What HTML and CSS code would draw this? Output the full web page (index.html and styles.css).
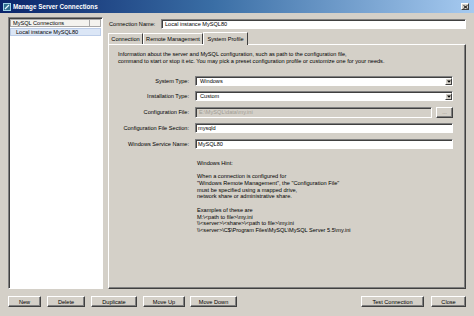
FILE: index.html
```html
<!DOCTYPE html>
<html>
<head>
<meta charset="utf-8">
<link rel="stylesheet" href="styles.css">
</head>
<body>
<div class="window">
  <div class="titlebar">
    <svg class="app-icon" viewBox="0 0 8 8" width="8" height="8">
      <rect x="0.5" y="0.5" width="7" height="7" fill="#2f6f8f" stroke="#9fd3e6" stroke-width="1"/>
      <path d="M2 6 L6 2" stroke="#e6f6ff" stroke-width="1.2"/>
    </svg>
    <span class="title">Manage Server Connections</span>
    <span class="close-btn">
      <svg viewBox="0 0 5 4" width="5" height="4"><path d="M0.5 0.3 L4.5 3.7 M4.5 0.3 L0.5 3.7" stroke="#000" stroke-width="1"/></svg>
    </span>
  </div>
  <div class="content">
    <div class="main">
      <div class="conn-list">
        <div class="list-header">
          <span class="col-main">MySQL Connections</span>
          <span class="col-rest"></span>
        </div>
        <div class="list-row selected">Local instance MySQL80</div>
      </div>
      <div class="right">
        <div class="name-row">
          <span class="name-label">Connection Name:</span>
          <span class="field name-field">Local instance MySQL80</span>
        </div>
        <div class="tabs">
          <span class="tab tab-conn">Connection</span>
          <span class="tab tab-remote">Remote Management</span>
          <span class="tab tab-active">System Profile</span>
        </div>
        <div class="panel">
          <p class="info">Information about the server and MySQL configuration, such as path to the configuration file,<br>command to start or stop it etc. You may pick a preset configuration profile or customize one for your needs.</p>
          <div class="form">
            <span class="label">System Type:</span>
            <span class="field combo">Windows<span class="arrow"><svg viewBox="0 0 4 3" width="4" height="3"><path d="M0 0.5 H4 L2 2.7 Z" fill="#000"/></svg></span></span>
            <span class="label">Installation Type:</span>
            <span class="field combo">Custom<span class="arrow"><svg viewBox="0 0 4 3" width="4" height="3"><path d="M0 0.5 H4 L2 2.7 Z" fill="#000"/></svg></span></span>
            <span class="label">Configuration File:</span>
            <span class="file-row">
              <span class="field disabled">E:\MySQL\data\my.ini</span>
              <span class="browse-btn">...</span>
            </span>
            <span class="label">Configuration File Section:</span>
            <span class="field plain">mysqld</span>
            <span class="label">Windows Service Name:</span>
            <span class="field plain">MySQL80</span>
          </div>
          <div class="hint">
            <div>Windows Hint:</div>
            <div>&nbsp;</div>
            <div>When a connection is configured for</div>
            <div>"Windows Remote Management", the "Configuration File"</div>
            <div>must be specified using a mapped drive,</div>
            <div>network share or administrative share.</div>
            <div>&nbsp;</div>
            <div>Examples of these are</div>
            <div>M:\&lt;path to file&gt;\my.ini</div>
            <div>\\&lt;server&gt;\&lt;share&gt;\&lt;path to file&gt;\my.ini</div>
            <div>\\&lt;server&gt;\C$\Program Files\MySQL\MySQL Server 5.5\my.ini</div>
          </div>
        </div>
      </div>
    </div>
    <div class="buttons">
      <span class="btn b-new">New</span>
      <span class="btn b-delete">Delete</span>
      <span class="btn b-dup">Duplicate</span>
      <span class="btn b-up">Move Up</span>
      <span class="btn b-down">Move Down</span>
      <span class="btn b-test">Test Connection</span>
      <span class="btn b-close">Close</span>
    </div>
  </div>
</div>
</body>
</html>
```
FILE: styles.css
```css
* { box-sizing: border-box; margin: 0; padding: 0; }
html, body { margin: 0; }
body {
  width: 474px;
  height: 316px;
  overflow: hidden;
  background: #d4d0c8;
  font-family: "Liberation Sans", Arial, sans-serif;
  font-size: 5.6px;
  color: #000;
}
.window {
  width: 474px;
  height: 316px;
  display: flex;
  flex-direction: column;
}
.titlebar {
  height: 13px;
  flex: none;
  background: linear-gradient(to right, #0a246a 0%, #3a6ea5 45%, #a6caf0 100%);
  display: flex;
  align-items: center;
  padding: 0 5px 0 3px;
  color: #fff;
  font-weight: bold;
  font-size: 6.3px;
}
.app-icon { display: block; margin-right: 2px; }
.title { flex: 1; }
.close-btn {
  width: 8px;
  height: 7px;
  background: #d4d0c8;
  border: 1px solid;
  border-color: #fff #404040 #404040 #fff;
  display: flex;
  align-items: center;
  justify-content: center;
}
.close-btn svg { display: block; }
.content {
  flex: 1;
  padding: 4px 8px 0 8px;
  display: flex;
  flex-direction: column;
}
.main {
  height: 272px;
  display: flex;
  gap: 5px;
}
.conn-list {
  width: 95px;
  background: #fff;
  border: 1px solid;
  border-color: #808080 #fff #fff #808080;
  box-shadow: inset 1px 1px #404040;
  padding: 1px 1px 0 1px;
}
.list-header {
  height: 8px;
  display: flex;
  background: #f4f3ef;
  border: 1px solid #a8a8a8;
}
.col-main {
  width: 79px;
  border-right: 1px solid #a8a8a8;
  padding-left: 2px;
  line-height: 6px;
}
.col-rest { flex: 1; }
.list-row {
  height: 8px;
  margin-top: 1px;
  padding-left: 6px;
  line-height: 7px;
}
.list-row.selected {
  background: #dbe6f6;
  border: 1px solid #bccde8;
  padding-left: 5px;
}
.right {
  flex: 1;
  display: flex;
  flex-direction: column;
}
.name-row {
  margin-top: 2px;
  height: 10px;
  display: flex;
  align-items: center;
}
.name-label { width: 53px; padding-left: 1px; }
.field {
  background: #fff;
  border: 1px solid;
  border-color: #808080 #fff #fff #808080;
  box-shadow: inset 1px 1px #404040;
  height: 10px;
  line-height: 8px;
  padding-left: 3px;
  display: flex;
  align-items: center;
  white-space: nowrap;
}
.name-field { flex: 1; }
.tabs {
  margin-top: 3px;
  height: 12px;
  display: flex;
  align-items: flex-end;
  position: relative;
  z-index: 1;
}
.tab {
  height: 11px;
  border: 1px solid;
  border-bottom: none;
  border-color: #fff #404040 transparent #fff;
  display: flex;
  align-items: center;
  justify-content: center;
  background: #d4d0c8;
}
.tab-conn { width: 35px; }
.tab-remote { width: 60px; }
.tab-active {
  width: 45px;
  height: 13px;
  margin-bottom: -1px;
  padding-bottom: 1px;
}
.panel {
  flex: 1;
  border: 1px solid;
  border-color: #fff #404040 #404040 #fff;
  box-shadow: inset -1px -1px #808080;
  padding: 5.5px 10px 0 9px;
}
.info { line-height: 7px; white-space: nowrap; }
.form {
  margin-top: 11.2px;
  display: grid;
  grid-template-columns: 71px 258px;
  grid-auto-rows: 10px;
  column-gap: 6px;
  row-gap: 5.8px;
  align-items: center;
}
.label { text-align: right; white-space: nowrap; }
.combo { padding-left: 4px; position: relative; }
.arrow {
  position: absolute;
  right: 0px;
  top: 1px;
  width: 7px;
  height: 7px;
  background: #d4d0c8;
  border: 1px solid;
  border-color: #fff #404040 #404040 #fff;
  display: flex;
  align-items: center;
  justify-content: center;
}
.arrow svg { display: block; }
.plain { padding-left: 2px; }
.file-row { display: flex; gap: 4px; height: 11px; }
.file-row .field { height: 11px; flex: none; width: 237px; }
.disabled { background: #d4d0c8; color: #a09c94; }
.browse-btn {
  width: 17px;
  height: 11px;
  border: 1px solid;
  border-color: #fff #404040 #404040 #fff;
  box-shadow: inset -1px -1px #808080;
  color: #8c8880;
  display: flex;
  align-items: center;
  justify-content: center;
  line-height: 6px;
}
.hint {
  margin-top: 11px;
  margin-left: 79px;
  line-height: 6.7px;
  white-space: nowrap;
}
.buttons {
  margin-top: 7px;
  height: 11px;
  display: flex;
}
.btn {
  height: 11px;
  background: #d4d0c8;
  border: 1px solid;
  border-color: #fff #404040 #404040 #fff;
  box-shadow: inset -1px -1px #808080;
  display: flex;
  align-items: center;
  justify-content: center;
  white-space: nowrap;
}
.b-new { width: 33px; }
.b-delete { width: 38px; margin-left: 6px; }
.b-dup { width: 46px; margin-left: 6px; }
.b-up { width: 42px; margin-left: 6px; }
.b-down { width: 47px; margin-left: 5px; }
.b-test { width: 63px; margin-left: auto; }
.b-close { width: 35px; margin-left: 7px; }
```
